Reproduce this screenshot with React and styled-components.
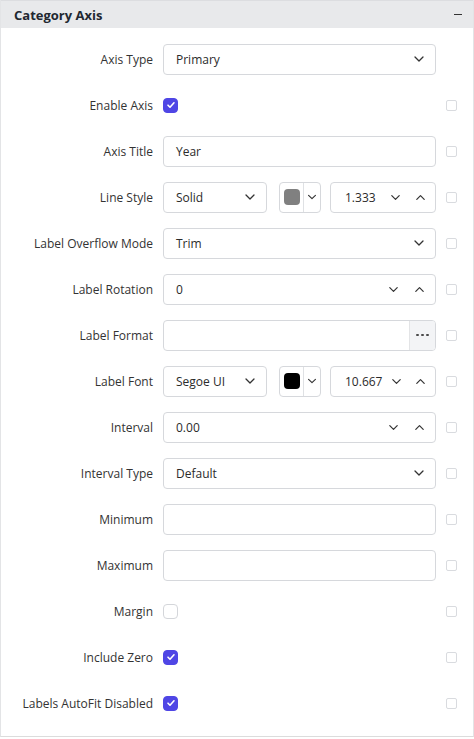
import React from 'react'
import styled, { createGlobalStyle } from 'styled-components'

const GlobalStyle = createGlobalStyle`
  html, body { margin: 0; padding: 0; background: #ffffff; }
  body { font-family: "Open Sans", "Liberation Sans", sans-serif; color: #333333; }
  * { box-sizing: border-box; }
`

const Panel = styled.div`
  width: 474px;
  height: 737px;
  border-left: 1px solid #e3e4e6;
  border-right: 1px solid #e3e4e6;
  border-bottom: 1px solid #dcdcdc;
  display: flex;
  flex-direction: column;
`

const Header = styled.div`
  height: 28px;
  background: #e8e9eb;
  border-top: 1px solid #dcdde0;
  display: flex;
  align-items: center;
  justify-content: space-between;
  padding: 0 11px 0 13px;
  font-size: 13px;
  font-weight: 700;
  color: #222831;
`

const Minus = styled.span`
  width: 8px;
  height: 1.5px;
  background: #333;
`

const Body = styled.div`
  padding-top: 8px;
  display: flex;
  flex-direction: column;
`

const Row = styled.div`
  height: 46px;
  display: grid;
  grid-template-columns: 152px 273px 11px;
  column-gap: 10px;
  align-items: center;
`

const Label = styled.label`
  text-align: right;
  font-size: 12px;
  color: #333;
  white-space: nowrap;
`

const Field = styled.div`
  height: 31px;
  border: 1px solid #d6d8dc;
  border-radius: 4px;
  background: #fff;
  display: flex;
  align-items: center;
  padding: 0 ${p => (p.$pad ? 4 : 0)}px 0 ${p => p.$left || 12}px;
  font-size: 12px;
  color: #2b2b2b;
  width: ${p => p.$w || '100%'};
  flex: ${p => (p.$grow ? 1 : 'none')};
  overflow: hidden;
`

const Value = styled.span`
  flex: 1;
`

const IconSlot = styled.span`
  width: ${p => p.$w || 24}px;
  display: flex;
  justify-content: center;
  align-items: center;
`

const Split = styled.div`
  display: flex;
  align-items: center;
`

const ColorBox = styled.div`
  width: 42px;
  height: 31px;
  margin: 0 9px 0 12px;
  border: 1px solid #d6d8dc;
  border-radius: 4px;
  display: flex;
  align-items: center;
`

const Swatch = styled.span`
  width: 16px;
  height: 16px;
  border-radius: 4px;
  margin-left: 4px;
  background: ${p => p.$c};
`

const Divider = styled.span`
  width: 1px;
  align-self: stretch;
  background: #dfe1e4;
  margin-left: 3px;
`

const DotsButton = styled.span`
  width: 26px;
  align-self: stretch;
  background: #f3f4f6;
  border-left: 1px solid #e3e4e6;
  display: flex;
  align-items: center;
  justify-content: center;
  gap: 2.5px;
  span {
    width: 2.5px;
    height: 2.5px;
    border-radius: 50%;
    background: #4a4a4a;
  }
`

const Check = styled.span`
  width: 15px;
  height: 15px;
  border-radius: 4px;
  background: ${p => (p.$on ? '#4f46e5' : '#fff')};
  border: 1px solid ${p => (p.$on ? '#4f46e5' : '#d4d6da')};
  display: flex;
  align-items: center;
  justify-content: center;
`

const Mini = styled.span`
  width: 11px;
  height: 11px;
  border: 1px solid #d9dbdf;
  border-radius: 2px;
  background: #fff;
`

const Down = ({ size = 14 }) => (
  <svg width={size} height={size} viewBox="0 0 14 14" fill="none">
    <path d="M3 5l4 4 4-4" stroke="#333" strokeWidth="1.3" strokeLinecap="round" strokeLinejoin="round" />
  </svg>
)

const Up = ({ size = 14 }) => (
  <svg width={size} height={size} viewBox="0 0 14 14" fill="none">
    <path d="M3 9l4-4 4 4" stroke="#333" strokeWidth="1.3" strokeLinecap="round" strokeLinejoin="round" />
  </svg>
)

const Tick = () => (
  <svg width="10" height="10" viewBox="0 0 10 10" fill="none">
    <path d="M2 5.2l2 2 4-4.4" stroke="#fff" strokeWidth="1.6" strokeLinecap="round" strokeLinejoin="round" />
  </svg>
)

const Select = ({ value, w }) => (
  <Field $w={w} $pad>
    <Value>{value}</Value>
    <IconSlot><Down /></IconSlot>
  </Field>
)

const Spinner = ({ value, narrow }) => (
  <Field $pad $grow={narrow} $left={narrow ? 14 : 12} $w={narrow ? 'auto' : '100%'}>
    <Value>{value}</Value>
    <IconSlot $w={28}><Down size={13} /></IconSlot>
    <IconSlot $w={narrow ? 22 : 24}><Up size={13} /></IconSlot>
  </Field>
)

const ColorPick = ({ c }) => (
  <ColorBox>
    <Swatch $c={c} />
    <Divider />
    <IconSlot $w={17}><Down size={12} /></IconSlot>
  </ColorBox>
)

const Combo = ({ value, color, num }) => (
  <Split>
    <Select value={value} w="104px" />
    <ColorPick c={color} />
    <Spinner value={num} narrow />
  </Split>
)

const rows = [
  { label: 'Axis Type', el: <Select value="Primary" />, mini: false },
  { label: 'Enable Axis', el: <Check $on><Tick /></Check> },
  { label: 'Axis Title', el: <Field>Year</Field> },
  { label: 'Line Style', el: <Combo value="Solid" color="#808080" num="1.333" /> },
  { label: 'Label Overflow Mode', el: <Select value="Trim" /> },
  { label: 'Label Rotation', el: <Spinner value="0" /> },
  {
    label: 'Label Format',
    el: (
      <Field>
        <Value />
        <DotsButton><span /><span /><span /></DotsButton>
      </Field>
    ),
  },
  { label: 'Label Font', el: <Combo value="Segoe UI" color="#000000" num="10.667" /> },
  { label: 'Interval', el: <Spinner value="0.00" /> },
  { label: 'Interval Type', el: <Select value="Default" /> },
  { label: 'Minimum', el: <Field /> },
  { label: 'Maximum', el: <Field /> },
  { label: 'Margin', el: <Check /> },
  { label: 'Include Zero', el: <Check $on><Tick /></Check> },
  { label: 'Labels AutoFit Disabled', el: <Check $on><Tick /></Check> },
]

export default function App() {
  return (
    <>
      <GlobalStyle />
      <Panel>
        <Header>
          <span>Category Axis</span>
          <Minus />
        </Header>
        <Body>
          {rows.map(r => (
            <Row key={r.label}>
              <Label>{r.label}</Label>
              {r.el}
              {r.mini === false ? <span /> : <Mini />}
            </Row>
          ))}
        </Body>
      </Panel>
    </>
  )
}
